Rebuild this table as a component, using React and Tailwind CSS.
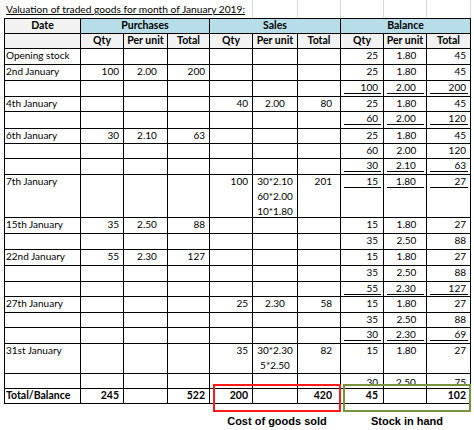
import React from "react";

// column widths + text placement, matching the sheet's grid lines
const COLS = [
  { w: "w-[76px]", a: "text-left pl-[1px]" },
  { w: "w-[43px]", a: "text-right pr-[4px]" },
  { w: "w-[44px]", a: "text-center pl-[3px]" },
  { w: "w-[42px]", a: "text-right pr-[4px]" },
  { w: "w-[43px]", a: "text-right pr-[4px]" },
  { w: "w-[45px]", a: "text-center" },
  { w: "w-[43px]", a: "text-right pr-[8px]" },
  { w: "w-[43px]", a: "text-right pr-[5px]" },
  { w: "w-[43px]", a: "text-center pl-[3px]" },
  { w: "w-[44px]", a: "text-right pr-[4px]" },
];

const UNDER = [
  "", "", "", "", "", "", "",
  "ml-[3px] mr-[2px] pr-[3px] text-right",
  "ml-[3px] mr-[2px] pl-[1px] text-center",
  "ml-[3px] mr-[2px] pr-[2px] text-right",
];

const rows = [
  { h: "h-[16px]", c: ["Opening stock", "", "", "", "", "", "", "25", "1.80", "45"] },
  { h: "h-[16px]", c: ["2nd January", "100", "2.00", "200", "", "", "", "25", "1.80", "45"] },
  { h: "h-[16px]", u: true, c: ["", "", "", "", "", "", "", "100", "2.00", "200"] },
  { h: "h-[15px]", c: ["4th January", "", "", "", "40", "2.00", "80", "25", "1.80", "45"] },
  { h: "h-[17px]", u: true, c: ["", "", "", "", "", "", "", "60", "2.00", "120"] },
  { h: "h-[15px]", c: ["6th January", "30", "2.10", "63", "", "", "", "25", "1.80", "45"] },
  { h: "h-[15px]", c: ["", "", "", "", "", "", "", "60", "2.00", "120"] },
  { h: "h-[16px]", u: true, c: ["", "", "", "", "", "", "", "30", "2.10", "63"] },
  { h: "h-[43px]", u: true, c: ["7th January", "", "", "", "100", "30*2.10\n60*2.00\n10*1.80", "201", "15", "1.80", "27"] },
  { h: "h-[16px]", c: ["15th January", "35", "2.50", "88", "", "", "", "15", "1.80", "27"] },
  { h: "h-[16px]", c: ["", "", "", "", "", "", "", "35", "2.50", "88"] },
  { h: "h-[16px]", c: ["22nd January", "55", "2.30", "127", "", "", "", "15", "1.80", "27"] },
  { h: "h-[16px]", c: ["", "", "", "", "", "", "", "35", "2.50", "88"] },
  { h: "h-[15px]", u: true, c: ["", "", "", "", "", "", "", "55", "2.30", "127"] },
  { h: "h-[16px]", c: ["27th January", "", "", "", "25", "2.30", "58", "15", "1.80", "27"] },
  { h: "h-[15px]", c: ["", "", "", "", "", "", "", "35", "2.50", "88"] },
  { h: "h-[16px]", u: true, c: ["", "", "", "", "", "", "", "30", "2.30", "69"] },
  { h: "h-[30px]", c: ["31st January", "", "", "", "35", "30*2.30\n5*2.50", "82", "15", "1.80", "27"] },
  { h: "h-[15px]", u: true, low: true, c: ["", "", "", "", "", "", "", "30", "2.50", "75"] },
];

const total = ["Total/Balance", "245", "", "522", "200", "", "420", "45", "", "102"];

function Cell({ i, value, u, low, bold }) {
  const col = COLS[i];
  const lines = value.split("\n");
  const underlined = u && i >= 7;
  return (
    <div
      className={`${col.w} shrink-0 overflow-hidden border-r border-black ${
        underlined ? "" : col.a
      } ${bold ? "font-bold" : ""} ${low ? "pt-[2px]" : ""}`}
    >
      {underlined ? (
        <div className={`${UNDER[i]} border-b border-black leading-[12px]`}>{value}</div>
      ) : lines.length > 1 ? (
        <div className="-mt-[1px]">
          {lines.map((l) => (
            <div key={l} className="leading-[15px]">
              {l}
            </div>
          ))}
        </div>
      ) : (
        <div className="leading-[12px]">{value}</div>
      )}
    </div>
  );
}

const SUB = ["Qty", "Per unit", "Total"];

export default function App() {
  return (
    <div className="relative h-[430px] w-[474px] overflow-hidden bg-white text-[10px] text-black [font-family:Lato,'Noto_Sans',sans-serif]">
      {/* title row with faint sheet gridlines */}
      <div className="flex h-[18px]">
        <div className="ml-[4px] w-[249px] shrink-0 whitespace-nowrap border-r border-[#dadada] pl-[2px] pt-[4px] text-[10.2px] leading-[11px]">
          <span className="underline decoration-[1px] underline-offset-[1px]">
            Valuation of traded goods for month of January 2019:
          </span>
        </div>
        <div className="w-[45px] shrink-0 border-r border-[#dadada]" />
        <div className="w-[43px] shrink-0 border-r border-[#dadada]" />
        <div className="w-[43px] shrink-0 border-r border-[#dadada]" />
        <div className="w-[43px] shrink-0 border-r border-[#dadada]" />
        <div className="w-[44px] shrink-0 border-r border-[#dadada]" />
      </div>

      <div className="ml-[4px] w-[467px] border-l border-t border-black">
        {/* header */}
        <div className="flex h-[15px] border-b border-black text-[10.5px] font-bold leading-[13px]">
          <div className="w-[76px] shrink-0 border-r border-black bg-[#f2f2f2] text-center">Date</div>
          <div className="w-[129px] shrink-0 border-r border-black bg-[#b7dee8] text-center">Purchases</div>
          <div className="w-[131px] shrink-0 border-r border-black bg-[#b7dee8] text-center">Sales</div>
          <div className="w-[130px] shrink-0 border-r border-black bg-[#b7dee8] text-center">Balance</div>
        </div>
        <div className="flex h-[15px] border-b border-black bg-[#f2f2f2] text-[10.5px] font-bold leading-[13px]">
          <div className="w-[76px] shrink-0 border-r border-black" />
          {[1, 2, 3, 4, 5, 6, 7, 8, 9].map((i) => (
            <div key={i} className={`${COLS[i].w} shrink-0 border-r border-black text-center`}>
              {SUB[(i - 1) % 3]}
            </div>
          ))}
        </div>

        {rows.map((r, ri) => (
          <div key={ri} className={`flex ${r.h} border-b border-black`}>
            {r.c.map((v, i) => (
              <Cell key={i} i={i} value={v} u={r.u} low={r.low} />
            ))}
          </div>
        ))}

        <div className="flex h-[15px] border-b border-black text-[10.5px]">
          {total.map((v, i) => (
            <Cell key={i} i={i} value={v} bold />
          ))}
        </div>
      </div>

      {/* notes under the table */}
      <div className="mt-[11px] flex pl-[213px] text-[11px] font-bold leading-[13px] [font-family:'Liberation_Sans',Arial,sans-serif]">
        <div className="w-[128px] shrink-0 text-center">Cost of goods sold</div>
        <div className="ml-[2px] w-[128px] shrink-0 text-center">Stock in hand</div>
      </div>

      <div className="absolute left-[213px] top-[384px] h-[28px] w-[128px] border-2 border-[#ff1a1a]" />
      <div className="absolute left-[343px] top-[384px] h-[28px] w-[128px] border-2 border-[#77933c]" />
    </div>
  );
}
